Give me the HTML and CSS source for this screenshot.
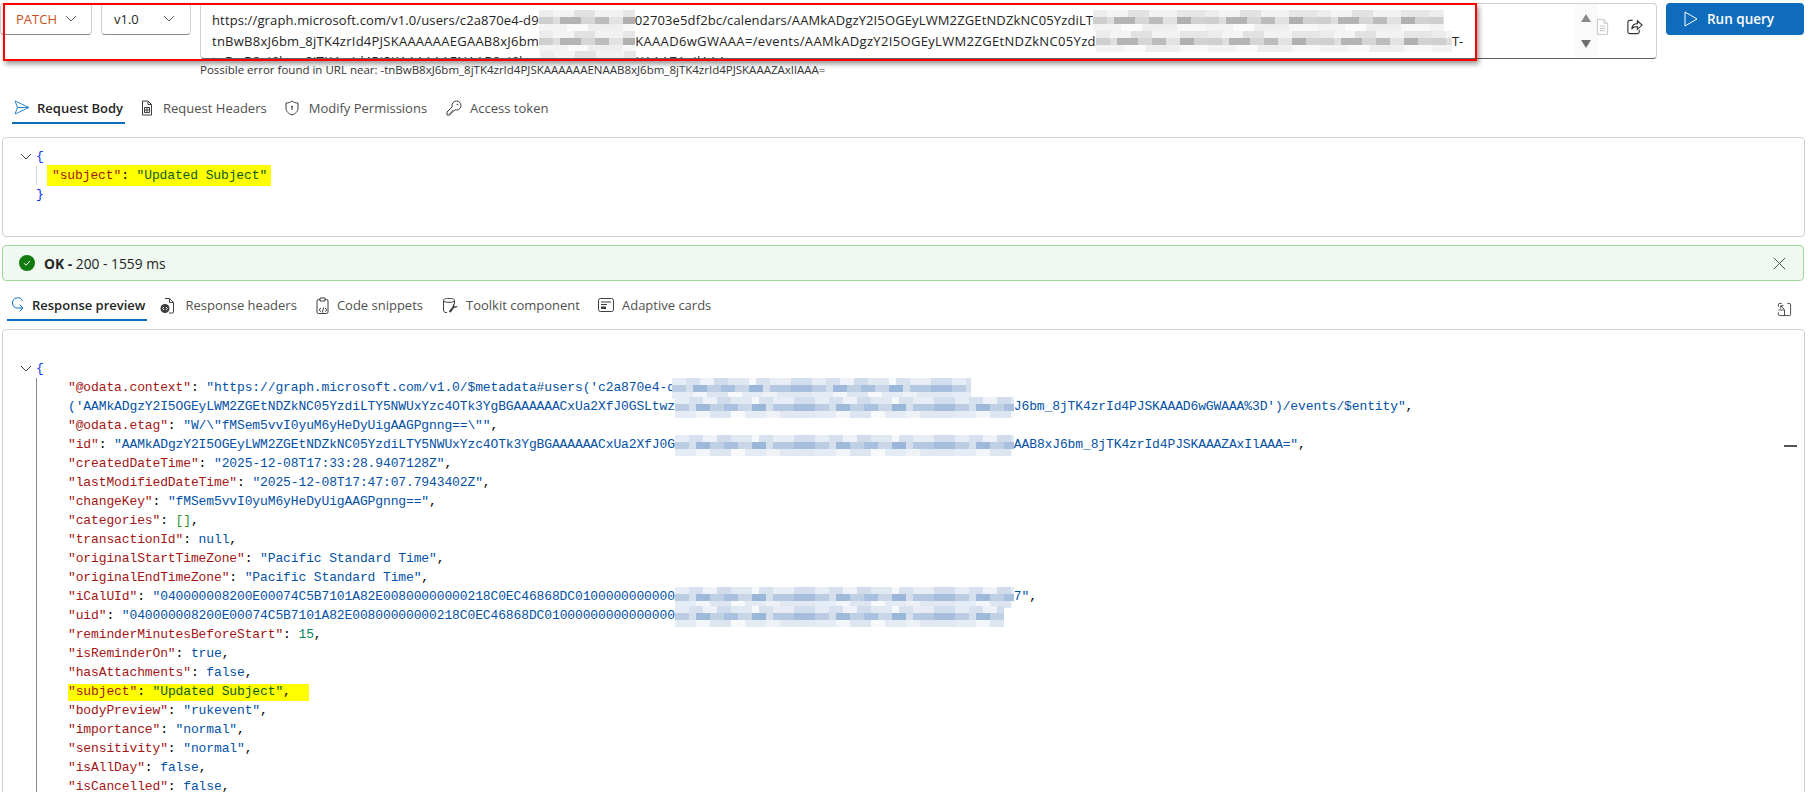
FILE: index.html
```html
<!DOCTYPE html>
<html lang="en">
<head>
<meta charset="utf-8">
<title>Graph Explorer</title>
<link rel="stylesheet" href="styles.css">
</head>
<body>
<div class="page">
  <div class="query-row">
    <div class="select select-method"><span class="method">PATCH</span><svg class="chev" viewBox="0 0 12 8"><path d="M1 1l5 5 5-5"/></svg></div>
    <div class="select select-version"><span>v1.0</span><svg class="chev" viewBox="0 0 12 8"><path d="M1 1l5 5 5-5"/></svg></div>
    <div class="url-box">
      <div class="url-text">
        <div class="url-line"><span class="lead-a">https://graph.microsoft.com/v1.0/users/c2a870e4-d9</span><i class="mosaic grey w-a"></i><span class="tail-a">02703e5df2bc/calendars/AAMkADgzY2I5OGEyLWM2ZGEtNDZkNC05YzdiLT</span><i class="mosaic grey w-b"></i></div>
        <div class="url-line"><span class="lead-b">tnBwB8xJ6bm_8jTK4zrId4PJSKAAAAAAEGAAB8xJ6bm</span><i class="mosaic grey w-a"></i><span class="tail-b">KAAAD6wGWAAA=/events/AAMkADgzY2I5OGEyLWM2ZGEtNDZkNC05Yzd</span><i class="mosaic grey w-d"></i>T-</div>
        <div class="url-line"><span class="lead-b">tnBwB8xJ6bm_8jTK4zrId4PJSKAAAAAAENAAB8xJ6bm</span><i class="mosaic grey w-a"></i><span class="tail-b">KAAAZAxIlAAA=</span></div>
      </div>
      <div class="scroller"><span class="arrow-up"></span><span class="arrow-down"></span></div>
      <svg class="doc-icon" viewBox="0 0 14 18"><path d="M1.500 1h7l4 4v12h-11zM8.500 1v4h4M4 8h6M4 10.500h6M4 13h6"/></svg>
      <svg class="share-icon" viewBox="0 0 18 18"><path d="M7 2.500H4a2 2 0 0 0-2 2v10a2 2 0 0 0 2 2h8a2 2 0 0 0 2-2v-2"/><path d="M6 12c.5-4 3-6 6-6V3l5 4.500L12 12V9c-3 0-5 1-6 3z"/></svg>
    </div>
    <button class="run-btn"><svg class="run-icon" viewBox="0 0 14 16"><path d="M1 1l12 7-12 7z"/></svg>Run query</button>
  </div>
  <div class="url-hint">Possible error found in URL near: -tnBwB8xJ6bm_8jTK4zrId4PJSKAAAAAAENAAB8xJ6bm_8jTK4zrId4PJSKAAAZAxIlAAA=</div>

  <div class="tabs request-tabs">
    <div class="tab active"><svg class="ti i-send" viewBox="0 0 16 15"><path d="M1 1l14 6.500L1 14l2.500-6.500zM3.500 7.500H15"/></svg>Request Body</div>
    <div class="tab"><svg class="ti i-headers" viewBox="0 0 12 16"><path d="M1.500 1h5.500l3.500 3.500v10.500h-9zM7 1v3.500h3.500"/><path d="M3.500 7.500h5v5h-5zM3.500 10h5M6 7.500v5"/></svg>Request Headers</div>
    <div class="tab"><svg class="ti i-shield" viewBox="0 0 14 16"><path d="M7 1c1.500 1.300 3.500 2 6 2v5c0 3.500-2.500 5.800-6 7-3.500-1.200-6-3.500-6-7V3c2.500 0 4.500-.7 6-2z"/><circle class="fill" cx="7" cy="6.800" r="1"/><path d="M7 7.500v2.500"/></svg>Modify Permissions</div>
    <div class="tab"><svg class="ti i-key" viewBox="0 0 16 16"><path d="M10.500 1a4.500 4.500 0 0 1 0 9c-.5 0-1-.1-1.400-.2L8 11H6v2H4v2H1v-3l5.200-5.100A4.500 4.500 0 0 1 10.500 1z"/><circle class="fill" cx="11.500" cy="4.500" r=".8"/></svg>Access token</div>
  </div>

  <div class="editor request-editor">
    <div class="code-line"><svg class="fold" viewBox="0 0 12 8"><path d="M1 1l5 5 5-5"/></svg><span class="brace">{</span></div>
    <div class="code-line guide"><span class="hl hl-request"><span class="k">"subject"</span>: <span class="sg">"Updated Subject"</span></span></div>
    <div class="code-line"><span class="brace">}</span></div>
  </div>

  <div class="status">
    <svg class="ok-icon" viewBox="0 0 16 16"><circle cx="8" cy="8" r="8"/><path d="M5 8.200l2 2 4-4.200"/></svg>
    <b>OK - </b><span class="status-detail">200 - 1559 ms</span>
    <svg class="close-icon" viewBox="0 0 14 14"><path d="M1 1l12 12M13 1L1 13"/></svg>
  </div>

  <div class="tabs response-tabs">
    <div class="tab active"><svg class="ti i-preview" viewBox="0 0 13 16"><path d="M11.500 4A5.200 5.200 0 0 0 1.500 6c0 3 2 5 5 5H12M8.500 7.500L12 11l-3.500 3.500"/></svg>Response preview</div>
    <div class="tab"><svg class="ti i-rheaders" viewBox="0 0 15 17"><path d="M5 1.500h4.500l4 4V15a1 1 0 0 1-1 1H9M9.500 1.500v4h4"/><circle class="fill" cx="5" cy="11.500" r="4.500"/><path class="white" d="M4 10L2.700 11.500 4 13M6 10l1.300 1.500L6 13"/></svg>Response headers</div>
    <div class="tab"><svg class="ti i-code" viewBox="0 0 15 17"><path d="M10 2.500h1.500a1.500 1.500 0 0 1 1.500 1.500v11a1.500 1.500 0 0 1-1.500 1.500h-8A1.500 1.500 0 0 1 2 15V4a1.500 1.500 0 0 1 1.500-1.500H5M5 1h5v3H5zM6 11l-2 1.800L6 14.600M10 11l2 1.800-2 1.800M8.700 10.500l-1.400 5"/></svg>Code snippets</div>
    <div class="tab"><svg class="ti i-toolkit" viewBox="0 0 16 17"><path d="M1.500 3.500C1.500 2 3 1.500 7 1.500s5.500.5 5.500 2V7M1.500 3.500c0 1.300 2 1.800 5.500 1.800s5.500-.5 5.500-1.800M1.500 3.500V13c0 1.500 1 2.500 2.500 2.500h1"/><path class="fill" d="M15.500 9c-.3 1.500-2 2.200-3.200 1.500L8.500 15.800 6.800 14.300l4-4.700c-.5-1.400.5-3 2.200-3l-1 1.800 1.300 1 2-.4z"/></svg>Toolkit component</div>
    <div class="tab"><svg class="ti i-cards" viewBox="0 0 16 14"><rect x=".5" y=".5" width="15" height="13" rx="2"/><path d="M3 4h10M3 6.500h6"/><rect class="fill" x="3" y="8.500" width="5" height="2.500"/></svg>Adaptive cards</div>
    <svg class="expand-icon" viewBox="0 0 16 16"><path d="M5 1.500H3A1.500 1.500 0 0 0 1.500 3v2M11 1.500h2A1.500 1.500 0 0 1 14.500 3v10a1.500 1.500 0 0 1-1.500 1.500H3A1.500 1.500 0 0 1 1.500 13v-2M1.500 8.500H8v6M4 4l4 4M4 4h3M4 4v3"/></svg>
  </div>

  <div class="editor response-editor">
    <span class="scroll-mark"></span>
    <div class="code-line"><svg class="fold" viewBox="0 0 12 8"><path d="M1 1l5 5 5-5"/></svg><span class="brace">{</span></div>
    <div class="json">
      <div class="code-line"><span class="k">"@odata.context"</span>: <span class="s">"https://graph.microsoft.com/v1.0/$metadata#users('c2a870e4-d</span><i class="mosaic blue w-1"></i></div>
      <div class="code-line"><span class="s">('AAMkADgzY2I5OGEyLWM2ZGEtNDZkNC05YzdiLTY5NWUxYzc4OTk3YgBGAAAAAACxUa2XfJ0GSLtwz</span><i class="mosaic blue w-2"></i><span class="s">J6bm_8jTK4zrId4PJSKAAAD6wGWAAA%3D')/events/$entity"</span>,</div>
      <div class="code-line"><span class="k">"@odata.etag"</span>: <span class="s">"W/\"fMSem5vvI0yuM6yHeDyUigAAGPgnng==\""</span>,</div>
      <div class="code-line"><span class="k">"id"</span>: <span class="s">"AAMkADgzY2I5OGEyLWM2ZGEtNDZkNC05YzdiLTY5NWUxYzc4OTk3YgBGAAAAAACxUa2XfJ0G</span><i class="mosaic blue w-2"></i><span class="s">AAB8xJ6bm_8jTK4zrId4PJSKAAAZAxIlAAA="</span>,</div>
      <div class="code-line"><span class="k">"createdDateTime"</span>: <span class="s">"2025-12-08T17:33:28.9407128Z"</span>,</div>
      <div class="code-line"><span class="k">"lastModifiedDateTime"</span>: <span class="s">"2025-12-08T17:47:07.7943402Z"</span>,</div>
      <div class="code-line"><span class="k">"changeKey"</span>: <span class="s">"fMSem5vvI0yuM6yHeDyUigAAGPgnng=="</span>,</div>
      <div class="code-line"><span class="k">"categories"</span>: <span class="bracket">[]</span>,</div>
      <div class="code-line"><span class="k">"transactionId"</span>: <span class="s">null</span>,</div>
      <div class="code-line"><span class="k">"originalStartTimeZone"</span>: <span class="s">"Pacific Standard Time"</span>,</div>
      <div class="code-line"><span class="k">"originalEndTimeZone"</span>: <span class="s">"Pacific Standard Time"</span>,</div>
      <div class="code-line"><span class="k">"iCalUId"</span>: <span class="s">"040000008200E00074C5B7101A82E00800000000218C0EC46868DC0100000000000</span><i class="mosaic blue w-2"></i><span class="s">7"</span>,</div>
      <div class="code-line"><span class="k">"uid"</span>: <span class="s">"040000008200E00074C5B7101A82E00800000000218C0EC46868DC01000000000000000</span><i class="mosaic blue w-3"></i></div>
      <div class="code-line"><span class="k">"reminderMinutesBeforeStart"</span>: <span class="n">15</span>,</div>
      <div class="code-line"><span class="k">"isReminderOn"</span>: <span class="s">true</span>,</div>
      <div class="code-line"><span class="k">"hasAttachments"</span>: <span class="s">false</span>,</div>
      <div class="code-line"><span class="hl hl-response"><span class="k">"subject"</span>: <span class="sg">"Updated Subject"</span>,</span></div>
      <div class="code-line"><span class="k">"bodyPreview"</span>: <span class="s">"rukevent"</span>,</div>
      <div class="code-line"><span class="k">"importance"</span>: <span class="s">"normal"</span>,</div>
      <div class="code-line"><span class="k">"sensitivity"</span>: <span class="s">"normal"</span>,</div>
      <div class="code-line"><span class="k">"isAllDay"</span>: <span class="s">false</span>,</div>
      <div class="code-line"><span class="k">"isCancelled"</span>: <span class="s">false</span>,</div>
    </div>
  </div>

  <div class="red-frame"></div>
</div>
</body>
</html>
```
FILE: styles.css
```css
* { box-sizing: border-box; }
html, body { margin: 0; height: 100%; overflow: hidden; background: #fff; }
.page { position: relative; width: 1818px; height: 792px; overflow: hidden; font-family: "Open Sans", "Noto Sans", sans-serif; font-size: 13px; color: #242424; }

.query-row { display: flex; align-items: flex-start; height: 59px; padding-top: 3px; }
.select { display: flex; align-items: center; justify-content: space-between; height: 32px; border: 1px solid #d1d1d1; border-bottom-color: #8a8a8a; border-radius: 4px; background: #fff; font-size: 13px; }
.select-method { width: 92px; padding: 0 14px 0 15px; }
.select-version { width: 90px; margin-left: 9px; padding: 0 15px 0 12px; }
.method { color: #c8501c; }
.chev { width: 12px; height: 8px; fill: none; stroke: #616161; stroke-width: 1; }
.url-box { position: relative; width: 1457px; height: 56px; margin-left: 9px; border: 1px solid #d1d1d1; border-bottom-color: #616161; border-radius: 4px; overflow: hidden; }
.url-text { padding: 6px 0 0 11px; font-size: 13px; line-height: 21px; }
.url-line { white-space: nowrap; height: 20.5px; }
.lead-a { letter-spacing: 0.135px; }
.lead-b { letter-spacing: 0.25px; }
.tail-a { letter-spacing: 0.13px; }
.tail-b { letter-spacing: 0.34px; }
.scroller { position: absolute; left: 1374px; top: 0; bottom: 0; width: 23px; background: #fafafa; }
.arrow-up, .arrow-down { position: absolute; left: 6px; width: 0; height: 0; border-left: 5.500px solid transparent; border-right: 5.500px solid transparent; }
.arrow-up { top: 10px; border-bottom: 8px solid #8a8a8a; }
.arrow-down { top: 36px; border-top: 8px solid #707070; }
.doc-icon { position: absolute; left: 1395px; top: 14px; width: 13px; height: 18px; fill: none; stroke: #c4c4c4; stroke-width: 1; }
.share-icon { position: absolute; left: 1425px; top: 14px; width: 17px; height: 17px; fill: none; stroke: #333; stroke-width: 1.200; }
.run-btn { display: flex; align-items: center; gap: 9px; width: 138px; height: 32px; margin-left: 9px; padding: 0 0 0 18px; border: 0; border-radius: 4px; background: #0f6cbd; color: #fff; font: 600 13.500px "Open Sans", sans-serif; }
.run-icon { width: 14px; height: 16px; fill: none; stroke: #fff; stroke-width: 1; }

.url-hint { margin-left: 200px; height: 19px; padding-top: 2px; font-size: 11.500px; line-height: 17px; color: #333; white-space: nowrap; }

.tabs { display: flex; align-items: center; position: relative; }
.request-tabs { margin: 15px 0 0 12px; height: 31px; gap: 14px; }
.response-tabs { margin: 7px 0 0 7px; height: 33px; gap: 13px; }
.response-tabs .tab { padding-top: 3px; }
.tab { display: flex; align-items: center; gap: 7px; height: 100%; padding: 0 2px; color: #505050; font-size: 13px; border-bottom: 2px solid transparent; white-space: nowrap; }
.tab.active { color: #242424; font-weight: 600; border-bottom-color: #0f6cbd; }
.response-tabs .tab.active { padding-left: 4px; margin-right: -2px; }
.ti { height: 16px; fill: none; stroke: #3d3d3d; stroke-width: 1; flex: none; }
.ti .fill { fill: #3d3d3d; stroke: none; }
.ti .white { stroke: #fff; }
.i-send { width: 16px; height: 15px; stroke: #2b86cf; }
.i-headers { width: 12px; margin-right: 3px; }
.i-shield { width: 14px; margin-right: 3px; }
.i-key { width: 16px; margin-left: 1px; margin-right: 1px; }
.i-preview { width: 13px; margin-right: 1px; stroke: #0f6cbd; }
.i-rheaders { width: 15px; height: 17px; margin-right: 3px; }
.i-code { width: 15px; height: 17px; margin-left: 1px; }
.i-toolkit { width: 16px; height: 17px; margin-left: 2px; margin-right: 1px; }
.i-cards { width: 16px; height: 14px; margin-left: 1px; margin-right: 1px; }
.expand-icon { position: absolute; left: 1770px; top: 14px; width: 15px; height: 15px; fill: none; stroke: #424242; stroke-width: 1; }

.editor { border: 1px solid #d1d1d1; border-radius: 4px; margin-left: 2px; width: 1803px; font-family: "Liberation Mono", monospace; font-size: 13px; letter-spacing: -0.120px; color: #000; }
.request-editor { height: 100px; padding: 9px 0 0 33px; margin-top: 13px; }
.code-line { position: relative; height: 19px; line-height: 19px; white-space: nowrap; }
.fold { position: absolute; left: -16px; top: 6px; width: 12px; height: 8px; fill: none; stroke: #444; stroke-width: 1; }
.guide { border-left: 1px solid #d3d3d3; padding-left: 15px; }
.brace { color: #0431fa; }
.k { color: #a31515; }
.s { color: #0451a5; }
.sg { color: #0b5e1e; }
.n { color: #098658; }
.bracket { color: #319331; }
.hl { display: inline-block; background: #ff0; }
.hl-request { margin-left: -5px; padding: 0 4px 0 5px; margin-top: -1px; height: 21px; line-height: 21px; }
.hl-response { height: 17px; line-height: 15px; margin-top: 2px; padding-right: 18px; vertical-align: top; }

.status { display: flex; align-items: center; width: 1802px; height: 36px; margin: 8px 0 0 2px; padding: 0 17px 0 16px; background: #eff8f1; border: 1px solid #9fd89f; border-radius: 4px; font-size: 13.800px; }
.ok-icon { width: 16px; height: 16px; margin-right: 9px; }
.ok-icon circle { fill: #107c10; }
.ok-icon path { fill: none; stroke: #fff; stroke-width: 1; }
.status b { font-weight: 700; white-space: pre; }
.close-icon { width: 13px; height: 13px; margin-left: auto; fill: none; stroke: #424242; stroke-width: 1; }

.response-editor { position: relative; height: 480px; margin-top: 8px; padding: 29px 0 0 33px; border-radius: 4px 4px 0 0; }
.json { padding-left: 31px; border-left: 1px solid #8a8a8a; }
.scroll-mark { position: absolute; left: 1781px; top: 115px; width: 13px; height: 2px; background: #555; }

.mosaic { display: inline-block; vertical-align: top; background-repeat: repeat-x; }
.mosaic.blue {
  height: 21px;
  background-size: 140px 7px;
  background-position: 0 0, 0 7px, 0 14px;
  background-image:
    linear-gradient(90deg, #e6ecf5 0 14px, #d6e0ee 14px 28px, #eef2f8 28px 42px, #d0dcec 42px 56px, #e0e8f2 56px 77px, #f6f8fb 77px 84px, #d8e2ef 84px 98px, #e8edf5 98px 119px, #d2deed 119px 140px),
    linear-gradient(90deg, #bccde3 0 14px, #d4dfec 14px 21px, #9fb9da 21px 35px, #bfd0e5 35px 49px, #a9c0de 49px 63px, #c8d6e8 63px 77px, #9ab6d8 77px 91px, #d6e0ed 91px 98px, #b4c8e1 98px 119px, #a6bedc 119px 140px),
    linear-gradient(90deg, #e6ecf5 0 21px, #f2f5f9 21px 35px, #dde5f1 35px 56px, #f7f9fb 56px 70px, #e5ebf4 70px 91px, #eef2f7 91px 105px, #e1e8f2 105px 140px);
}
.mosaic.grey {
  height: 21px;
  background-size: 112px 7px;
  background-position: 0 0, 0 7px, 0 14px;
  background-image:
    linear-gradient(90deg, #ececec 0 14px, #f4f4f4 14px 35px, #e2e2e2 35px 56px, #f2f2f2 56px 84px, #e6e6e6 84px 112px),
    linear-gradient(90deg, #cfcfcf 0 14px, #dedede 14px 21px, #b4b4b4 21px 42px, #d6d6d6 42px 56px, #bcbcbc 56px 70px, #e2e2e2 70px 84px, #b0b0b0 84px 98px, #d2d2d2 98px 112px),
    linear-gradient(90deg, #f3f3f3 0 28px, #fafafa 28px 49px, #eeeeee 49px 84px, #f8f8f8 84px 112px);
}
.w-a { width: 96px; }
.w-b { width: 351px; }
.w-d { width: 356px; }
.w-1 { width: 299px; margin-left: -3px; }
.w-2 { width: 339px; }
.w-3 { width: 329px; }

.red-frame { position: absolute; left: 3px; top: 3px; width: 1474px; height: 58px; border: 2.500px solid #f00; box-shadow: 2px 3px 5px rgba(0,0,0,.4); pointer-events: none; }
```
